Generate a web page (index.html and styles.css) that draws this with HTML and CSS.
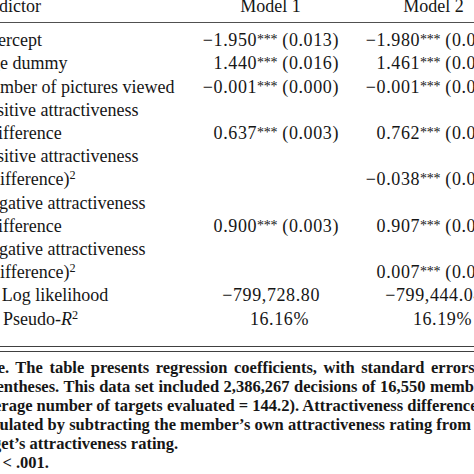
FILE: index.html
```html
<!DOCTYPE html>
<html>
<head>
<meta charset="utf-8">
<link rel="stylesheet" href="styles.css">
</head>
<body>
<div class="page">
  <div class="row head">
    <div class="pred hpred">Predictor</div>
    <div class="hcell">Model 1</div>
    <div class="hcell">Model 2</div>
  </div>
  <div class="tbody">
    <div class="row">
      <div class="pred">Intercept</div>
      <div class="val">&minus;1.950<span class="st">***</span> (0.013)</div>
      <div class="val">&minus;1.980<span class="st">***</span> (0.013)</div>
    </div>
    <div class="row">
      <div class="pred">Age dummy</div>
      <div class="val">1.440<span class="st">***</span> (0.016)</div>
      <div class="val">1.461<span class="st">***</span> (0.016)</div>
    </div>
    <div class="row">
      <div class="pred">Number of pictures viewed</div>
      <div class="val">&minus;0.001<span class="st">***</span> (0.000)</div>
      <div class="val">&minus;0.001<span class="st">***</span> (0.000)</div>
    </div>
    <div class="row">
      <div class="pred">Positive attractiveness<span class="cont">difference</span></div>
      <div class="val">0.637<span class="st">***</span> (0.003)</div>
      <div class="val">0.762<span class="st">***</span> (0.004)</div>
    </div>
    <div class="row">
      <div class="pred">Positive attractiveness<span class="cont paren">(difference)<sup>2</sup></span></div>
      <div class="val"></div>
      <div class="val">&minus;0.038<span class="st">***</span> (0.001)</div>
    </div>
    <div class="row">
      <div class="pred">Negative attractiveness<span class="cont">difference</span></div>
      <div class="val">0.900<span class="st">***</span> (0.003)</div>
      <div class="val">0.907<span class="st">***</span> (0.005)</div>
    </div>
    <div class="row">
      <div class="pred">Negative attractiveness<span class="cont paren">(difference)<sup>2</sup></span></div>
      <div class="val"></div>
      <div class="val">0.007<span class="st">***</span> (0.001)</div>
    </div>
    <div class="row">
      <div class="pred">&minus;2 Log likelihood</div>
      <div class="val fit">&minus;799,728.80</div>
      <div class="val fit">&minus;799,444.04</div>
    </div>
    <div class="row">
      <div class="pred sub">Pseudo-<i>R</i><sup>2</sup></div>
      <div class="val pct">16.16%</div>
      <div class="val pct">16.19%</div>
    </div>
  </div>
  <div class="rule2"></div>
  <div class="note">
    <span class="line just">Note. The table presents regression coefficients, with standard errors in</span>
    <span class="line just">parentheses. This data set included 2,386,267 decisions of 16,550 members</span>
    <span class="line just">(average number of targets evaluated = 144.2). Attractiveness difference was</span>
    <span class="line just">calculated by subtracting the member&rsquo;s own attractiveness rating from the</span>
    <span class="line">target&rsquo;s attractiveness rating.</span>
    <span class="line"><span class="nst">***</span><i>p</i> &lt; .001.</span>
  </div>
</div>
</body>
</html>
```
FILE: styles.css
```css
html, body {
  margin: 0;
  padding: 0;
  background: #ffffff;
}

body {
  overflow: hidden;
  width: 474px;
  height: 474px;
  color: #161616;
  font-family: "Liberation Serif", "Times New Roman", serif;
}

.page {
  margin: -5px 0 0 -22px;
  width: 540px;
}

.row {
  display: grid;
  grid-template-columns: 198px 137px 137px;
  column-gap: 26px;
  font-size: 18px;
  line-height: 23.2px;
}

.head {
  padding-bottom: 4px;
  border-bottom: 1px solid #505050;
}

.hpred {
  margin-left: -3px;
}

.hcell {
  text-align: center;
}

.tbody {
  padding-top: 6px;
  padding-bottom: 15px;
  border-bottom: 1px solid #404040;
}

.pred {
  white-space: nowrap;
}

.pred.sub {
  padding-left: 25px;
}

.cont {
  display: block;
  padding-left: 11px;
}

.cont.paren {
  padding-left: 7px;
}

sup {
  font-size: 0.68em;
  line-height: 0;
  vertical-align: 0.5em;
}

.st {
  font-size: 14px;
  letter-spacing: -0.3px;
  vertical-align: 0.12em;
  line-height: 0;
}

.val {
  align-self: end;
  text-align: right;
  white-space: nowrap;
  letter-spacing: 0.6px;
}

.val.fit {
  padding-right: 19px;
}

.val.pct {
  padding-right: 30px;
}

.rule2 {
  margin-top: 4px;
  border-top: 1px solid #404040;
}

.note {
  margin: 6px 0 0 -6px;
  width: 523px;
  font-size: 16.5px;
  line-height: 19px;
  font-weight: bold;
}

.note i {
  font-style: italic;
}

.nst {
  font-size: 12px;
  vertical-align: 0.3em;
  line-height: 0;
}

.line {
  display: block;
  white-space: nowrap;
}

.line.just {
  text-align: justify;
  text-align-last: justify;
}
```
